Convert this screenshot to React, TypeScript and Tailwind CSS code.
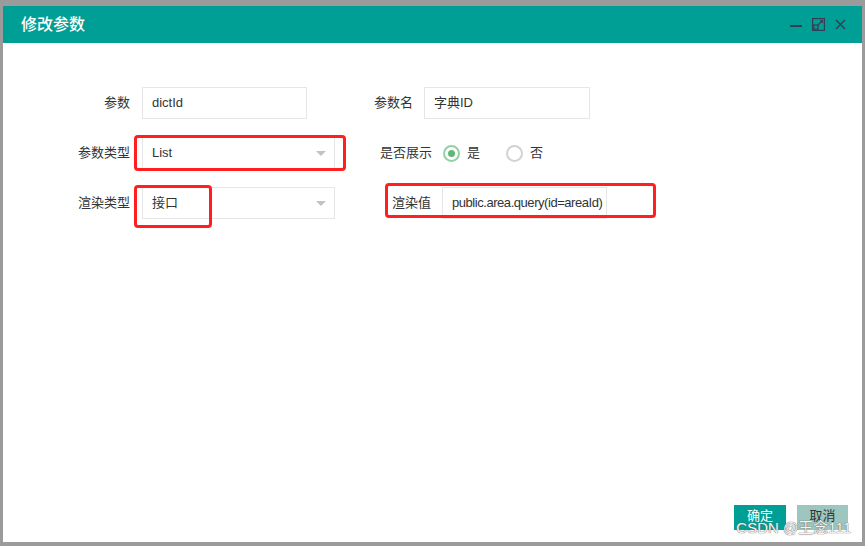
const font = "font-['Liberation_Sans','Noto_Sans_CJK_SC',sans-serif]";

function TextInput({ value, width, tight = false }: { value: string; width: string; tight?: boolean }) {
  return (
    <div
      className={`flex h-[32px] items-center overflow-hidden whitespace-nowrap border border-[#e6e6e6] bg-white pl-[9px] text-[13px] text-[#333] ${tight ? "tracking-[-0.45px]" : ""} ${width}`}
    >
      {value}
    </div>
  );
}

function Select({ value }: { value: string }) {
  return (
    <div className="flex h-[32px] w-[193px] items-center justify-between border border-[#e6e6e6] bg-white pl-[9px] pr-[8px] text-[13px] text-[#333]">
      <span>{value}</span>
      <span className="h-0 w-0 border-x-[5px] border-t-[5px] border-x-transparent border-t-[#c2c2c2]" />
    </div>
  );
}

function Radio({ checked, label }: { checked: boolean; label: string }) {
  return (
    <div className="flex items-center gap-[7px] text-[13px] text-[#333]">
      <span
        className={`flex size-[17px] items-center justify-center rounded-full border-2 ${checked ? "border-[#8fd3a4]" : "border-[#d2d2d2]"}`}
      >
        {checked && <span className="size-[7px] rounded-full bg-[#5fb878]" />}
      </span>
      {label}
    </div>
  );
}

function Label({ text, className = "" }: { text: string; className?: string }) {
  return <span className={`text-[13px] text-[#333] ${className}`}>{text}</span>;
}

export default function App() {
  return (
    <div className={`h-[546px] w-[865px] overflow-hidden bg-[#9b9b9b] pl-[3px] pt-[6px] ${font}`}>
      <div className="flex h-[536px] w-[859px] flex-col bg-white">
        {/* title bar */}
        <div className="flex h-[37px] shrink-0 items-center justify-between bg-[#009f95] pl-[18px] pr-[16px]">
          <span className="text-[16px] font-medium text-white">修改参数</span>
          <div className="flex items-center gap-[10px]">
            <span className="mt-[2px] h-[2px] w-[12px] bg-[#2f4056]" />
            <svg width="13" height="13" viewBox="0 0 13 13" fill="none" stroke="#2f4056" strokeWidth="1.2">
              <rect x="0.6" y="0.6" width="11.8" height="11.8" />
              <rect x="1.8" y="7" width="4.2" height="4.2" />
              <path d="M6 7 L10.5 2.5 M8 2.5 H10.5 V5" />
            </svg>
            <svg width="11" height="11" viewBox="0 0 11 11" stroke="#2f4056" strokeWidth="1.4">
              <path d="M1 1 L10 10 M10 1 L1 10" />
            </svg>
          </div>
        </div>

        {/* body */}
        <div className="relative flex flex-1 flex-col">
          <div className="flex flex-col gap-[18px] pt-[44px]">
            {/* row 1 */}
            <div className="flex items-center">
              <div className="flex w-[139px] justify-end pr-[12px]">
                <Label text="参数" />
              </div>
              <TextInput value="dictId" width="w-[165px]" />
              <Label text="参数名" className="ml-[67px] w-[50px]" />
              <TextInput value="字典ID" width="w-[166px]" />
            </div>

            {/* row 2 */}
            <div className="flex items-center">
              <div className="flex w-[139px] justify-end pr-[12px]">
                <Label text="参数类型" />
              </div>
              <Select value="List" />
              <Label text="是否展示" className="ml-[45px] w-[63px]" />
              <div className="flex items-center gap-[26px]">
                <Radio checked label="是" />
                <Radio checked={false} label="否" />
              </div>
            </div>

            {/* row 3 */}
            <div className="flex items-center">
              <div className="flex w-[139px] justify-end pr-[12px]">
                <Label text="渲染类型" />
              </div>
              <Select value="接口" />
              <Label text="渲染值" className="ml-[57px] w-[50px]" />
              <TextInput value="public.area.query(id=areaId)" width="w-[165px]" tight />
            </div>
          </div>

          {/* red annotation boxes */}
          <div className="absolute left-[131px] top-[92px] h-[36px] w-[212px] rounded-[4px] border-[3px] border-[#ff1f1f]" />
          <div className="absolute left-[131px] top-[142px] h-[43px] w-[78px] rounded-[4px] border-[3px] border-[#ff1f1f]" />
          <div className="absolute left-[382px] top-[140px] h-[35px] w-[271px] rounded-[4px] border-[3px] border-[#ff1f1f]" />

          {/* footer */}
          <div className="mt-auto flex justify-end gap-[11px] pb-[12px] pr-[14px]">
            <button className="h-[25px] w-[52px] bg-[#009f95] pb-[3px] text-[13px] text-white">确定</button>
            <button className="h-[25px] w-[51px] bg-[#9cc6be] pb-[3px] text-[13px] text-[#333]">取消</button>
          </div>
          <span className="absolute bottom-[3px] right-[11px] text-[15px] text-[#f4f4f4] [text-shadow:0_0_1px_#666,0_0_1px_#666]">
            CSDN @王念111
          </span>
        </div>
      </div>
    </div>
  );
}
